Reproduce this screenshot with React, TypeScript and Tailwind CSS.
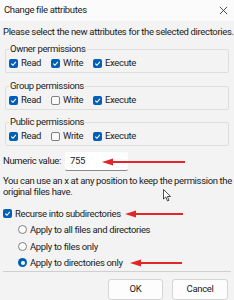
import React from 'react';

const Check = ({ checked }: { checked: boolean }) =>
  checked ? (
    <span className="w-[9px] h-[9px] rounded-[2px] bg-[#005fb8] flex items-center justify-center shrink-0">
      <svg width="7" height="7" viewBox="0 0 10 10">
        <path d="M1.8 5.2 L4.2 7.5 L8.4 2.6" fill="none" stroke="white" strokeWidth="1.6" />
      </svg>
    </span>
  ) : (
    <span className="w-[9px] h-[9px] rounded-[2px] border border-[#808080] bg-[#fbfbfb] shrink-0" />
  );

const Radio = ({ checked }: { checked: boolean }) =>
  checked ? (
    <span className="w-[9px] h-[9px] rounded-full bg-[#005fb8] flex items-center justify-center shrink-0">
      <span className="w-[4px] h-[4px] rounded-full bg-white" />
    </span>
  ) : (
    <span className="w-[9px] h-[9px] rounded-full border border-[#808080] bg-[#fbfbfb] shrink-0" />
  );

const Arrow = ({ className, width }: { className: string; width: number }) => (
  <svg className={`absolute ${className}`} width={width} height="8" viewBox={`0 0 ${width} 8`}>
    <line x1="8" y1="4" x2={width} y2="4" stroke="#e0262a" strokeWidth="2" />
    <path d="M0 4 L11 0.5 L11 7.5 Z" fill="#e0262a" />
  </svg>
);

const Group = ({ title, perms, className }: { title: string; perms: boolean[]; className: string }) => (
  <div className={`relative mx-[5px] border border-[#dedede] rounded-[2px] h-[24px] flex items-center pt-[4px] pl-[3px] ${className}`}>
    <span className="absolute -top-[7px] left-[3px] px-[1px] bg-[#f3f3f3] leading-[12px]">{title}</span>
    {['Read', 'Write', 'Execute'].map((label, i) => (
      <label key={label} className={`flex items-center gap-[3px] leading-[12px] ${i < 2 ? 'w-[42px]' : ''}`}>
        <Check checked={perms[i]} />
        {label}
      </label>
    ))}
  </div>
);

export default function App() {
  return (
    <div className="w-[234px] h-[300px] bg-[#f3f3f3] text-[9.5px] tracking-[-0.35px] text-[#1b1b1b] relative overflow-hidden" style={{ fontFamily: 'Roboto, "Noto Sans", sans-serif' }}>
      <div className="h-[21px] bg-[#fbfbfb] flex items-center justify-between pl-[4px] pr-[6px]">
        <span>Change file attributes</span>
        <svg width="9" height="9" viewBox="0 0 10 10">
          <path d="M1 1 L9 9 M9 1 L1 9" stroke="#333" strokeWidth="1" />
        </svg>
      </div>
      <div className="pl-[3px] pt-[5px] leading-[12px] whitespace-nowrap">
        Please select the new attributes for the selected directories.
      </div>
      <div className="mt-[11px] flex flex-col">
        <Group title="Owner permissions" perms={[true, true, true]} className="" />
        <Group title="Group permissions" perms={[true, false, true]} className="mt-[13px]" />
        <Group title="Public permissions" perms={[true, false, true]} className="mt-[12px]" />
      </div>
      <div className="mt-[6px] flex items-center pl-[3px]">
        <span className="w-[62px]">Numeric value:</span>
        <div className="w-[63px] h-[19px] bg-white border-b border-[#8a8a8a] rounded-[2px] pl-[5px] flex items-center">755</div>
      </div>
      <div className="mt-[4px] pl-[3px] leading-[11px] whitespace-nowrap">
        You can use an x at any position to keep the permission the
        <br />
        original files have.
      </div>
      <label className="mt-[10px] pl-[3px] flex items-center gap-[3px] leading-[13px]">
        <Check checked={true} />
        Recurse into subdirectories
      </label>
      <div className="mt-[3px] pl-[18px] flex flex-col gap-[3.5px] leading-[13px]">
        <label className="flex items-center gap-[3px]"><Radio checked={false} />Apply to all files and directories</label>
        <label className="flex items-center gap-[3px]"><Radio checked={false} />Apply to files only</label>
        <label className="flex items-center gap-[3px]"><Radio checked={true} />Apply to directories only</label>
      </div>
      <div className="mt-[2px] mx-[3px] border-t border-[#d0d0d0]" />
      <div className="mt-[7px] flex justify-end gap-[9px] pr-[6px]">
        <button className="w-[55px] h-[21px] bg-[#fdfdfd] border border-[#d5d5d5] rounded-[3px]">OK</button>
        <button className="w-[56px] h-[21px] bg-[#fdfdfd] border border-[#d5d5d5] rounded-[3px]">Cancel</button>
      </div>

      <Arrow className="left-[102px] top-[158px]" width={83} />
      <Arrow className="left-[125px] top-[210px]" width={58} />
      <Arrow className="left-[130px] top-[259px]" width={52} />
      <svg className="absolute left-[163px] top-[189px]" width="9" height="13" viewBox="0 0 9 13">
        <path d="M0.5 0.5 L0.5 10 L2.8 8 L4.5 12 L6 11.3 L4.4 7.5 L7.6 7.5 Z" fill="white" stroke="#222" strokeWidth="0.8" />
      </svg>
    </div>
  );
}
